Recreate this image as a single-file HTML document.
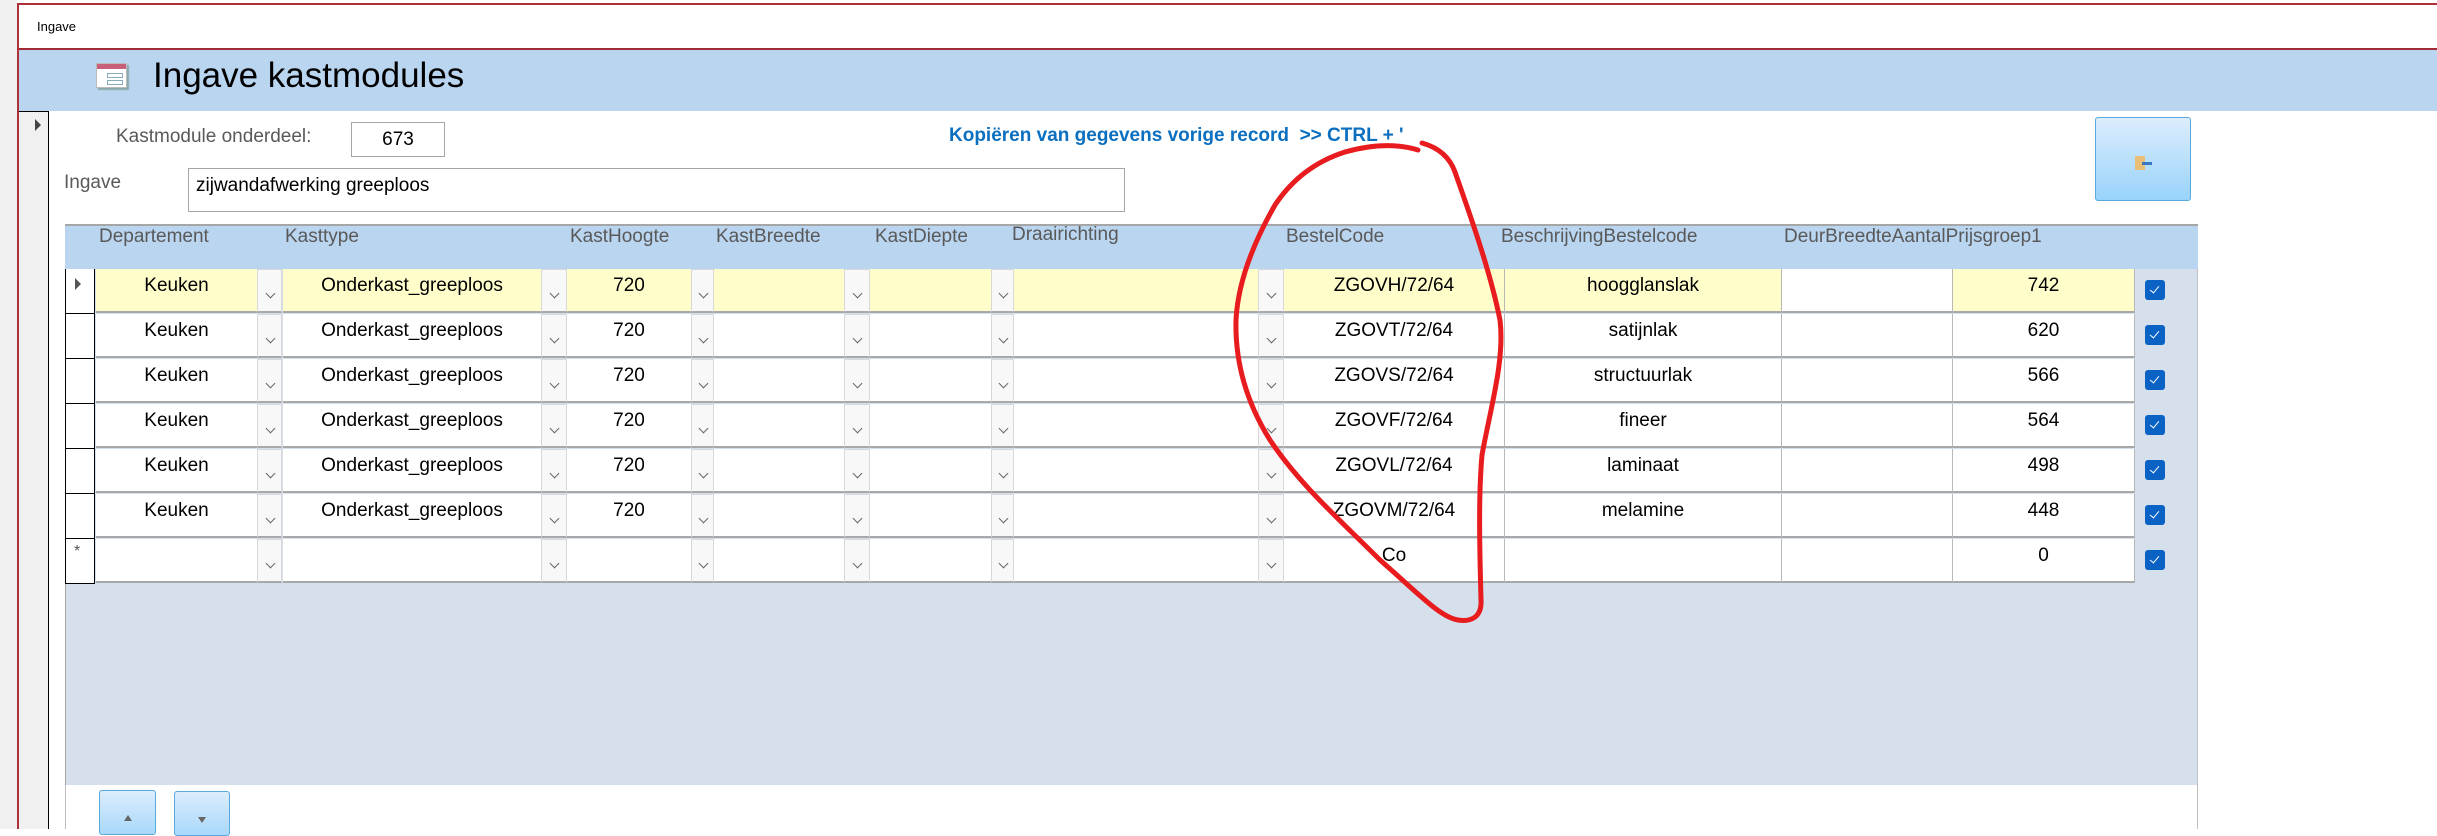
<!DOCTYPE html>
<html><head><meta charset="utf-8"><style>
*{margin:0;padding:0;box-sizing:border-box}
body{width:2437px;height:829px;position:relative;overflow:hidden;background:#fff;font-family:"Liberation Sans",Arial,sans-serif}
.a{position:absolute}
.h{position:absolute;top:226px;color:#595959;font-size:19px}
.c{position:absolute;height:44px;border-right:1px solid #b8b8b8;border-bottom:2px solid #a8a8a8;font-size:19px;text-align:center;padding-top:6px;color:#000;background:#fff}
.y{background:#fffecb}
.d{position:absolute;height:44px;background:#f8f8f8;border:1px solid #d8d8d8;border-bottom:2px solid #a8a8a8}
.d:after{content:"";position:absolute;left:50%;top:20px;width:6px;height:6px;margin-left:-3px;border-right:1px solid #666;border-bottom:1px solid #666;transform:rotate(45deg)}
.cb{position:absolute;left:2145px;width:20px;height:20px;background:#0a62c4;border-radius:3px}
.cb:after{content:"";position:absolute;left:7px;top:4px;width:4px;height:8px;border-right:1px solid #fff;border-bottom:1px solid #fff;transform:rotate(40deg)}
.rs{position:absolute;left:65px;width:30px;height:45px;border:1px solid #000;border-top:none;background:#fff}
</style></head><body>
<div class="a" style="left:0;top:0;width:17px;height:829px;background:#f0f0f0"></div>
<div class="a" style="left:17px;top:3px;width:2420px;height:2px;background:#b0303a"></div>
<div class="a" style="left:17px;top:3px;width:2px;height:826px;background:#b0303a"></div>
<div class="a" style="left:37px;top:19px;font-size:13px;color:#000">Ingave</div>
<div class="a" style="left:19px;top:48px;width:2418px;height:2px;background:#a02a35"></div>
<div class="a" style="left:19px;top:50px;width:2418px;height:61px;background:#bad5f0"></div>
<div class="a" style="left:96px;top:63px;width:31px;height:25px;background:#fff;border:1px solid #bbb;box-shadow:2px 2px 1px #8aa"><div style="height:5px;background:#c9607a"></div><div style="position:absolute;left:10px;top:9px;width:16px;height:5px;border:1px solid #8ab"></div><div style="position:absolute;left:10px;top:16px;width:16px;height:5px;border:1px solid #8ab"></div></div>
<div class="a" style="left:153px;top:56px;font-size:35px;color:#000">Ingave kastmodules</div>
<div class="a" style="left:19px;top:111px;width:29px;height:718px;background:#f0f0f0"></div>
<div class="a" style="left:19px;top:111px;width:30px;height:1px;background:#000"></div>
<div class="a" style="left:48px;top:111px;width:1px;height:718px;background:#000"></div>
<div class="a" style="left:35px;top:119px;width:0;height:0;border-left:6px solid #444;border-top:6px solid transparent;border-bottom:6px solid transparent"></div>
<div class="a" style="left:116px;top:126px;font-size:19px;color:#595959">Kastmodule onderdeel:</div>
<div class="a" style="left:351px;top:122px;width:94px;height:35px;border:1px solid #a6a6a6;font-size:19px;text-align:center;padding-top:6px">673</div>
<div class="a" style="left:949px;top:125px;font-size:19px;font-weight:bold;color:#0b6fc0">Kopiëren van gegevens vorige record &nbsp;&gt;&gt; CTRL + '</div>
<div class="a" style="left:64px;top:172px;font-size:19px;color:#595959">Ingave</div>
<div class="a" style="left:188px;top:168px;width:937px;height:44px;border:1px solid #a6a6a6;font-size:19px;padding:6px 0 0 7px">zijwandafwerking greeploos</div>
<div class="a" style="left:2095px;top:117px;width:96px;height:84px;border:1px solid #5aa8dc;border-radius:3px;background:linear-gradient(#dcedfc,#99d3fb)"><div style="position:absolute;left:39px;top:38px;width:10px;height:14px;background:#e8be78"></div><div style="position:absolute;left:46px;top:44px;width:10px;height:3px;background:#3a78c0"></div></div>
<div class="a" style="left:65px;top:224px;width:2133px;height:561px;background:#d6e0ec;border-left:1px solid #a6a6a6;border-right:1px solid #c0c0c0"></div>
<div class="a" style="left:65px;top:224px;width:2133px;height:45px;background:#bad5f0;border-top:2px solid #a6a6a6"></div>
<div class="a" style="left:65px;top:785px;width:1px;height:44px;background:#c0c0c0"></div>
<div class="a" style="left:2197px;top:785px;width:1px;height:44px;background:#c0c0c0"></div>
<div class="h" style="left:99px">Departement</div>
<div class="h" style="left:285px">Kasttype</div>
<div class="h" style="left:570px">KastHoogte</div>
<div class="h" style="left:716px">KastBreedte</div>
<div class="h" style="left:875px">KastDiepte</div>
<div class="h" style="left:1012px;top:224px">Draairichting</div>
<div class="h" style="left:1286px">BestelCode</div>
<div class="h" style="left:1501px">BeschrijvingBestelcode</div>
<div class="h" style="left:1784px">DeurBreedteAantalPrijsgroep1</div>
<div id="g"></div>
<div class="a" style="left:99px;top:790px;width:57px;height:45px;border:1px solid #5aa8dc;border-radius:3px;background:linear-gradient(#dcedfc,#a8d8fb)"><div style="position:absolute;left:24px;top:24px;border-bottom:6px solid #666;border-left:4px solid transparent;border-right:4px solid transparent"></div></div>
<div class="a" style="left:174px;top:791px;width:56px;height:45px;border:1px solid #5aa8dc;border-radius:3px;background:linear-gradient(#dcedfc,#a8d8fb)"><div style="position:absolute;left:23px;top:25px;border-top:6px solid #666;border-left:4px solid transparent;border-right:4px solid transparent"></div></div>
<script>
var rows=[["Keuken","Onderkast_greeploos","720","ZGOVH/72/64","hoogglanslak","742"],["Keuken","Onderkast_greeploos","720","ZGOVT/72/64","satijnlak","620"],["Keuken","Onderkast_greeploos","720","ZGOVS/72/64","structuurlak","566"],["Keuken","Onderkast_greeploos","720","ZGOVF/72/64","fineer","564"],["Keuken","Onderkast_greeploos","720","ZGOVL/72/64","laminaat","498"],["Keuken","Onderkast_greeploos","720","ZGOVM/72/64","melamine","448"],["","","","Co","","0"]];
var h="";
rows.forEach(function(r,i){var t=269+i*45,y=i==0?" y":"";
function c(l,w,txt,cls){h+='<div class="c'+(cls||y)+'" style="left:'+l+'px;top:'+t+'px;width:'+w+'px">'+txt+'</div>';}
function d(l,w){h+='<div class="d" style="left:'+l+'px;top:'+t+'px;width:'+w+'px"></div>';}
h+='<div class="rs" style="top:'+t+'px">'+(i==0?'<div style="position:absolute;left:9px;top:9px;border-left:6px solid #555;border-top:6px solid transparent;border-bottom:6px solid transparent"></div>':'')+(i==6?'<div style="position:absolute;left:8px;top:4px;font-size:16px;color:#555">*</div>':'')+'</div>';
c(96,162,r[0]);d(257,25);c(283,259,r[1]);d(541,26);c(567,125,r[2]);d(691,23);c(714,131,"");d(844,26);c(870,122,"");d(991,23);c(1014,245,"");d(1258,26);
c(1284,221,r[3]);c(1505,277,r[4]);c(1782,171,"",i==0?" ":"");c(1953,182,r[5]);
h+='<div class="cb" style="top:'+(280+i*45)+'px"></div>';});
document.getElementById("g").outerHTML=h;
</script>
<svg class="a" style="left:0;top:0" width="2437" height="829"><path d="M1422 143 C1440 148 1450 158 1455 172 C1470 215 1490 270 1500 320 C1505 360 1490 410 1482 455 C1478 500 1480 560 1481 600 C1482 618 1470 622 1458 620 C1440 617 1420 595 1380 560 C1340 520 1300 485 1270 440 C1245 400 1235 360 1236 320 C1238 280 1255 240 1275 205 C1295 175 1320 160 1345 152 C1370 145 1395 143 1418 150" fill="none" stroke="#e81c1f" stroke-width="5" stroke-linecap="round"/></svg>
</body></html>
